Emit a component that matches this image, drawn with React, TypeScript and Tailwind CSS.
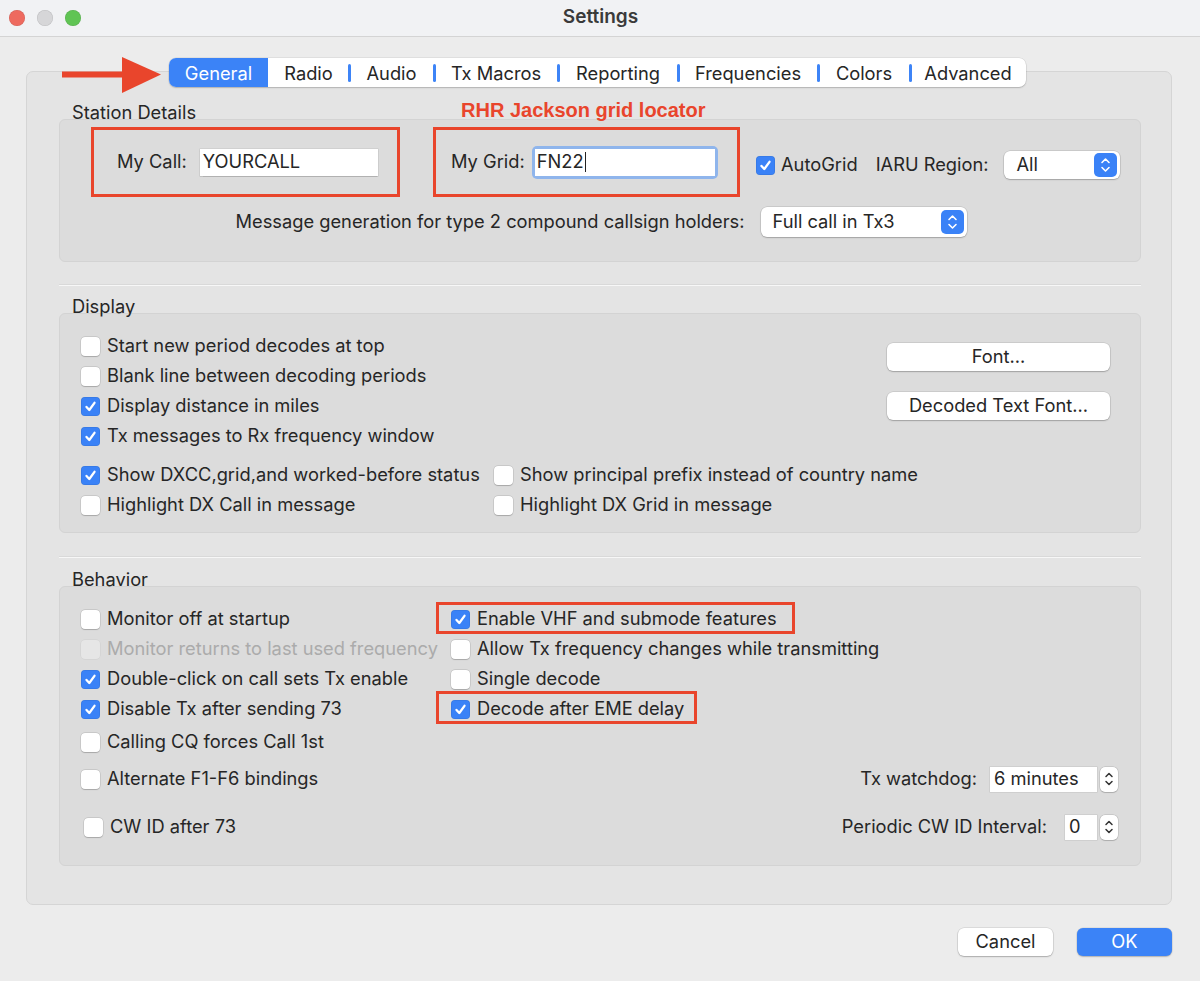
import React from "react";

function Check({ checked, disabled }: { checked?: boolean; disabled?: boolean }) {
  if (checked)
    return (
      <span className="w-[19px] h-[19px] rounded-[4px] bg-[#3a82f7] flex items-center justify-center shrink-0 shadow-[inset_0_0_0_0.5px_rgba(0,0,0,0.12)]">
        <svg width="13" height="13" viewBox="0 0 13 13">
          <path d="M2.5 6.9 L5.3 10 L10.5 2.8" stroke="white" strokeWidth="2.3" fill="none" strokeLinecap="round" strokeLinejoin="round" />
        </svg>
      </span>
    );
  return (
    <span
      className={`w-[19px] h-[19px] rounded-[4px] shrink-0 ${
        disabled ? "bg-[#e6e6e6] shadow-[0_0_0_0.5px_rgba(0,0,0,0.06)]" : "bg-white shadow-[0_0_0_0.5px_rgba(0,0,0,0.14),0_0.5px_1px_rgba(0,0,0,0.18)]"
      }`}
    />
  );
}

function Row({ label, checked, disabled }: { label: string; checked?: boolean; disabled?: boolean }) {
  return (
    <div className="flex items-center h-[30px] gap-[7px]">
      <Check checked={checked} disabled={disabled} />
      <span className={`whitespace-nowrap ${disabled ? "text-[#ababab]" : ""}`}>{label}</span>
    </div>
  );
}

function Stepper({ h }: { h: string }) {
  return (
    <span className={`w-[23px] ${h} rounded-[5px] bg-[#3a82f7] flex items-center justify-center shrink-0`}>
      <svg width="11" height="18" viewBox="0 0 11 18">
        <path d="M2 6.5 L5.5 3 L9 6.5" stroke="white" strokeWidth="1.6" fill="none" strokeLinecap="round" strokeLinejoin="round" />
        <path d="M2 11.5 L5.5 15 L9 11.5" stroke="white" strokeWidth="1.6" fill="none" strokeLinecap="round" strokeLinejoin="round" />
      </svg>
    </span>
  );
}

function Popup({ value, w, h }: { value: string; w: string; h: string }) {
  return (
    <div className={`${w} ${h} bg-white rounded-[6px] shadow-[0_0_0_0.5px_rgba(0,0,0,0.16),0_1px_1.5px_rgba(0,0,0,0.2)] flex items-center justify-between pl-[12px] pr-[3px] shrink-0`}>
      <span>{value}</span>
      <Stepper h="h-[24px]" />
    </div>
  );
}

function Spin({ value, w }: { value: string; w: string }) {
  return (
    <div className="flex items-center gap-[3px]">
      <div className={`${w} h-[25px] bg-white shadow-[0_0_0_0.5px_rgba(0,0,0,0.12)] flex items-center pl-[4px]`}>{value}</div>
      <div className="w-[18px] h-[25px] bg-white rounded-[5px] shadow-[0_0_0_0.5px_rgba(0,0,0,0.15),0_0.5px_1px_rgba(0,0,0,0.15)] flex items-center justify-center">
        <svg width="12" height="20" viewBox="0 0 12 20">
          <path d="M3 7.5 L6 4.5 L9 7.5" stroke="#333" strokeWidth="1.5" fill="none" strokeLinecap="round" strokeLinejoin="round" />
          <path d="M3 12.5 L6 15.5 L9 12.5" stroke="#333" strokeWidth="1.5" fill="none" strokeLinecap="round" strokeLinejoin="round" />
        </svg>
      </div>
    </div>
  );
}

function MacButton({ label, w }: { label: string; w: string }) {
  return (
    <div className={`${w} h-[28px] bg-white rounded-[6px] shadow-[0_0_0_0.5px_rgba(0,0,0,0.14),0_1px_1.5px_rgba(0,0,0,0.22)] flex items-center justify-center`}>
      {label}
    </div>
  );
}

const tabs: { label: string; w: string }[] = [
  { label: "General", w: "w-[99px]" },
  { label: "Radio", w: "w-[81px]" },
  { label: "Audio", w: "w-[85px]" },
  { label: "Tx Macros", w: "w-[124px]" },
  { label: "Reporting", w: "w-[120px]" },
  { label: "Frequencies", w: "w-[140px]" },
  { label: "Colors", w: "w-[92px]" },
  { label: "Advanced", w: "w-[116px]" },
];

function SectionTitle({ children }: { children: React.ReactNode }) {
  return <div className="h-[17px] leading-[20px] pl-[13px] relative">{children}</div>;
}

const RED = "border-[#e9452c]";

export default function App() {
  return (
    <div className="w-[1200px] h-[981px] bg-[#ececec] relative overflow-hidden text-[18.3px] text-[#262626] font-['Inter','Noto_Sans',sans-serif]">
      {/* title bar */}
      <div className="h-[37px] bg-[#f1f2f4] border-b border-[#d4d4d4] grid grid-cols-[1fr_auto_1fr] items-center">
        <div className="flex items-center gap-[12px] pl-[9px]">
          <span className="w-[16px] h-[16px] rounded-full bg-[#ee6a5f] shadow-[inset_0_0_0_0.5px_rgba(0,0,0,0.12)]" />
          <span className="w-[16px] h-[16px] rounded-full bg-[#d6d6d8] shadow-[inset_0_0_0_0.5px_rgba(0,0,0,0.12)]" />
          <span className="w-[16px] h-[16px] rounded-full bg-[#60c454] shadow-[inset_0_0_0_0.5px_rgba(0,0,0,0.12)]" />
        </div>
        <div className="font-semibold text-[#3a3a3a] text-[19px] -mt-[2px] pl-[1px]">Settings</div>
        <div />
      </div>

      {/* tabs */}
      <div className="pt-[21px] flex justify-center pr-[5px] relative z-10">
        <div className="flex h-[29px] bg-white rounded-[7px] shadow-[0_0_0_0.5px_rgba(0,0,0,0.1),0_1px_1.5px_rgba(0,0,0,0.18)]">
          {tabs.map((t, i) => (
            <div
              key={t.label}
              className={`${t.w} relative flex items-center justify-center pt-[2px] ${
                i === 0 ? "bg-[#3b83f7] text-white rounded-l-[7px]" : ""
              }`}
            >
              {i >= 2 && <span className="absolute left-[-1px] top-[6px] w-[2.5px] h-[18px] rounded-full bg-[#3d84f7]" />}
              {t.label}
            </div>
          ))}
        </div>
      </div>

      {/* pane */}
      <div className="-mt-[16px] ml-[26px] w-[1146px] h-[834px] bg-[#e4e4e4] border border-[#d5d5d5] rounded-[7px] pt-[30px] pl-[32px] pr-[30px]">
        {/* Station Details */}
        <SectionTitle>
          Station Details
          <span className="absolute left-[402px] top-[-2px] font-['Liberation_Sans',Arial,sans-serif] font-bold text-[#e9452c] text-[20px] whitespace-nowrap">
            RHR Jackson grid locator
          </span>
        </SectionTitle>
        <div className="h-[143px] bg-[#dcdcdc] border border-[#d3d3d3] rounded-[6px] pt-[7px]">
          <div className="flex items-start pl-[31px]">
            <div className={`w-[309px] h-[70px] border-[3px] ${RED} flex items-center pl-[23px]`}>
              <span>My Call:</span>
              <div className="ml-[13px] w-[178px] h-[27px] bg-white shadow-[0_0_0_0.5px_rgba(0,0,0,0.1),0_0.5px_1px_rgba(0,0,0,0.15)] flex items-center pl-[3px]">
                YOURCALL
              </div>
            </div>
            <div className={`ml-[33px] w-[307px] h-[70px] border-[3px] ${RED} flex items-center pl-[15px]`}>
              <span>My Grid:</span>
              <div className="ml-[7px] w-[186px] h-[33px] rounded-[5px] bg-[#8fb5ec] p-[3px]">
                <div className="w-full h-full bg-white flex items-center pl-[2px]">
                  FN22<span className="w-px h-[20px] bg-[#222] ml-[1px]" />
                </div>
              </div>
            </div>
            <div className="flex items-center mt-[24px] h-[28px]">
              <div className="ml-[16px] flex items-center gap-[6px]">
                <Check checked />
                <span>AutoGrid</span>
              </div>
              <span className="ml-[18px]">IARU Region:</span>
              <div className="ml-[16px]">
                <Popup value="All" w="w-[116px]" h="h-[28px]" />
              </div>
            </div>
          </div>
          <div className="flex items-center justify-center mt-[10px] h-[30px] pl-[2px]">
            <span>Message generation for type 2 compound callsign holders:</span>
            <div className="ml-[16px]">
              <Popup value="Full call in Tx3" w="w-[206px]" h="h-[30px]" />
            </div>
          </div>
        </div>

        <div className="h-px bg-[#f7f7f7] mt-[23px] shadow-[0_-1px_0_#d9d9d9]" />

        {/* Display */}
        <div className="mt-[10px]">
          <SectionTitle>Display</SectionTitle>
        </div>
        <div className="h-[220px] bg-[#dcdcdc] border border-[#d3d3d3] rounded-[6px] pt-[17px] pl-[21px] pr-[30px]">
          <div className="flex justify-between">
            <div className="flex flex-col">
              <Row label="Start new period decodes at top" />
              <Row label="Blank line between decoding periods" />
              <Row label="Display distance in miles" checked />
              <Row label="Tx messages to Rx frequency window" checked />
            </div>
            <div className="flex flex-col pt-[12px] gap-[21px]">
              <MacButton label="Font..." w="w-[223px]" />
              <MacButton label="Decoded Text Font..." w="w-[223px]" />
            </div>
          </div>
          <div className="mt-[9px] grid grid-cols-[413px_auto]">
            <Row label="Show DXCC,grid,and worked-before status" checked />
            <Row label="Show principal prefix instead of country name" />
            <Row label="Highlight DX Call in message" />
            <Row label="Highlight DX Grid in message" />
          </div>
        </div>

        <div className="h-px bg-[#f7f7f7] mt-[24px] shadow-[0_-1px_0_#d9d9d9]" />

        {/* Behavior */}
        <div className="mt-[11px]">
          <SectionTitle>Behavior</SectionTitle>
        </div>
        <div className="h-[280px] bg-[#dcdcdc] border border-[#d3d3d3] rounded-[6px] pt-[17px] pl-[21px] pr-[22px]">
          <div className="grid grid-cols-[370px_auto]">
            <Row label="Monitor off at startup" />
            <div className="relative w-fit">
              <span className={`absolute left-[-15px] right-[-18px] top-[-2px] bottom-[0px] border-[3px] ${RED}`} />
              <Row label="Enable VHF and submode features" checked />
            </div>
            <Row label="Monitor returns to last used frequency" disabled />
            <Row label="Allow Tx frequency changes while transmitting" />
            <Row label="Double-click on call sets Tx enable" checked />
            <Row label="Single decode" />
            <Row label="Disable Tx after sending 73" checked />
            <div className="relative w-fit">
              <span className={`absolute left-[-15px] right-[-13px] top-[-3px] bottom-[0px] border-[3px] ${RED}`} />
              <Row label="Decode after EME delay" checked />
            </div>
          </div>
          <div className="mt-[3px]">
            <Row label="Calling CQ forces Call 1st" />
          </div>
          <div className="mt-[7px] flex items-center justify-between">
            <Row label="Alternate F1-F6 bindings" />
            <div className="flex items-center gap-[13px]">
              <span>Tx watchdog:</span>
              <Spin value="6 minutes" w="w-[107px]" />
            </div>
          </div>
          <div className="mt-[18px] flex items-center justify-between">
            <div className="pl-[3px]">
              <Row label="CW ID after 73" />
            </div>
            <div className="flex items-center gap-[18px]">
              <span>Periodic CW ID Interval:</span>
              <Spin value="0" w="w-[32px]" />
            </div>
          </div>
        </div>
      </div>

      {/* bottom buttons */}
      <div className="mt-[23px] flex justify-end gap-[24px] pr-[28px]">
        <MacButton label="Cancel" w="w-[95px]" />
        <div className="w-[95px] h-[28px] rounded-[6px] bg-[#3b83f7] text-white flex items-center justify-center shadow-[0_0_0_0.5px_rgba(0,0,0,0.1),0_1px_1.5px_rgba(0,0,0,0.2)]">
          OK
        </div>
      </div>

      {/* red arrow annotation */}
      <svg className="absolute left-[60px] top-[56px]" width="104" height="40" viewBox="0 0 104 40">
        <rect x="2" y="15.5" width="64" height="6" fill="#e9452c" />
        <polygon points="62,1 101,18.5 62,37" fill="#e9452c" />
      </svg>
    </div>
  );
}
